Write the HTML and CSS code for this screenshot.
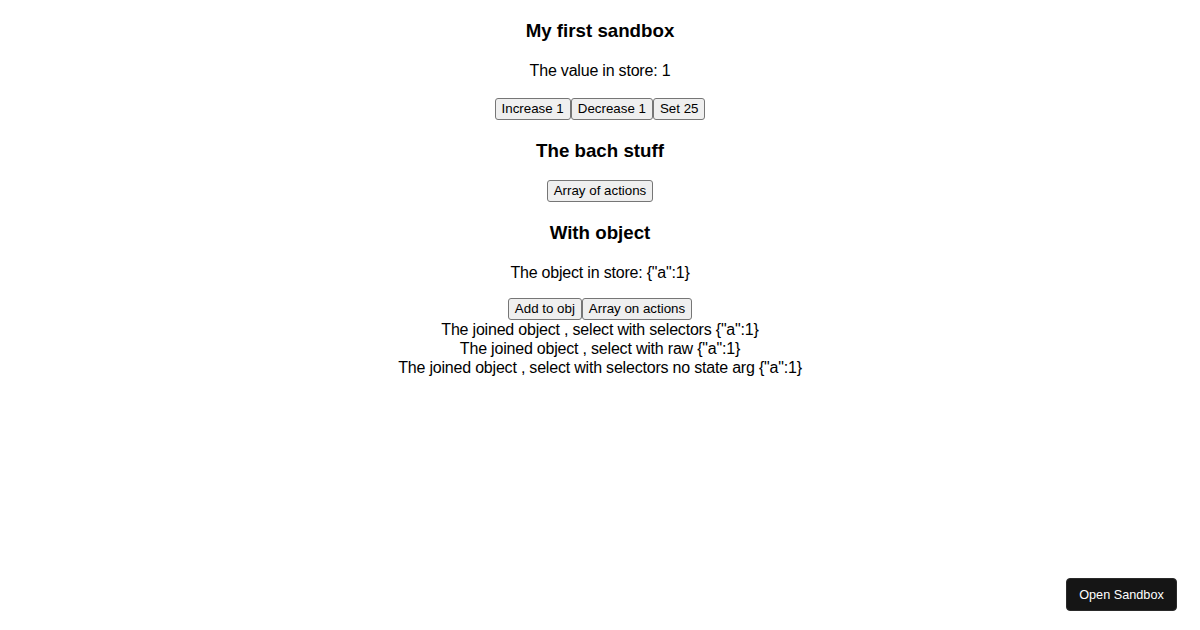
FILE: index.html
```html
<!DOCTYPE html>
<html>
<head>
<meta charset="utf-8">
<link rel="stylesheet" href="styles.css">
</head>
<body>
<div class="app">
  <h3 class="title">My first sandbox</h3>
  <p class="text">The value in store: 1</p>
  <div class="row"><button class="btn">Increase 1</button><button class="btn">Decrease 1</button><button class="btn">Set 25</button></div>
  <h3 class="title">The bach stuff</h3>
  <div class="row"><button class="btn">Array of actions</button></div>
  <h3 class="title">With object</h3>
  <p class="text text-tight">The object in store: {"a":1}</p>
  <div class="row row-tight"><button class="btn">Add to obj</button><button class="btn">Array on actions</button></div>
  <div class="line">The joined object , select with selectors {"a":1}</div>
  <div class="line">The joined object , select with raw {"a":1}</div>
  <div class="line">The joined object , select with selectors no state arg {"a":1}</div>
</div>
<a class="open-sandbox">Open Sandbox</a>
</body>
</html>
```
FILE: styles.css
```css
html, body {
  margin: 0;
  padding: 0;
  background: #fff;
}
body {
  font-family: "Liberation Sans", Arial, sans-serif;
  font-size: 16px;
  color: #000;
}
.app {
  text-align: center;
}
.title {
  font-size: 18.72px;
  font-weight: bold;
  line-height: 21.5px;
  margin: 20px 0 19px;
}
.text {
  margin: 18px 0;
  line-height: 19px;
  letter-spacing: -0.2px;
}
.text-tight {
  margin-bottom: 16px;
}
.line {
  line-height: 19px;
  letter-spacing: -0.2px;
}
.row {
  display: flex;
  justify-content: center;
  margin: 18px 0;
}
.row-tight {
  margin: 16px 0 0;
}
.btn {
  font-family: "Liberation Sans", Arial, sans-serif;
  font-size: 13.333px;
  height: 22px;
  box-sizing: border-box;
  line-height: 16px;
  background: #efefef;
  border: 1px solid #767676;
  border-radius: 3px;
  padding: 2px 6px;
  color: #000;
}
.open-sandbox {
  position: fixed;
  right: 23px;
  bottom: 19px;
  width: 111px;
  height: 33px;
  box-sizing: border-box;
  display: flex;
  align-items: center;
  justify-content: center;
  background: #151515;
  color: #fff;
  font-size: 12.7px;
  border-radius: 4px;
  border: 1px solid #2a2a2a;
}
```
